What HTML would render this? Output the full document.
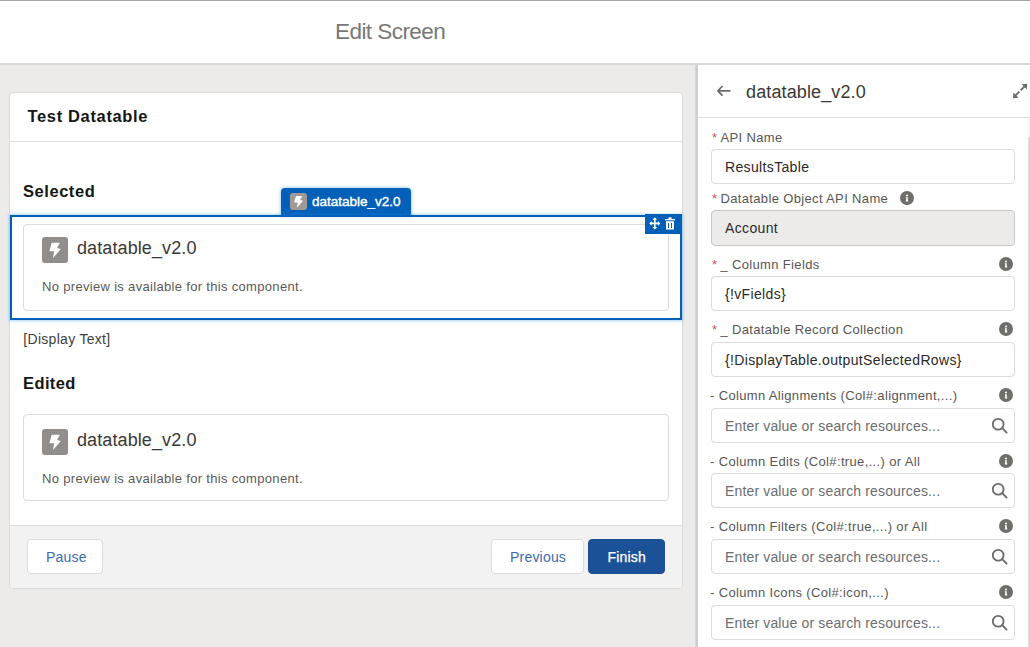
<!DOCTYPE html>
<html><head><meta charset="utf-8">
<style>
*{box-sizing:border-box;margin:0;padding:0}
html,body{width:1030px;height:647px;overflow:hidden;background:#fff;font-family:"Liberation Sans",sans-serif;color:#3e3e3c}
.a{position:absolute}
.t{position:absolute;white-space:nowrap;line-height:1}
#topline{left:0;top:0;width:1030px;height:1px;background:#a3a3a3}
#hdrb{left:0;top:63px;width:1030px;height:2px;background:#d8d8d8}
#canvas{left:0;top:65px;width:695px;height:582px;background:#ecebea}
#card{left:9px;top:92px;width:674px;height:497px;background:#fff;border:1px solid #dddbda;border-radius:4px;overflow:hidden}
#card .sep{left:0;top:48px;width:100%;height:1px;background:#dddbda}
#footer{left:0;top:432px;width:100%;height:64px;background:#f3f2f2;border-top:1px solid #dddbda}
.bold{font-weight:700;color:#161616}
.inner{position:absolute;left:23px;width:646px;height:87px;border:1px solid #dddbda;border-radius:4px;background:#fff}
.ico{position:absolute;width:26px;height:26px;border-radius:3px;background:#918d8a}
.btn{position:absolute;height:35px;border:1px solid #dddbda;border-radius:4px;background:#fff;color:#3a6bb2;font-size:14px}
#panel{left:698px;top:65px;width:332px;height:582px;background:#fff}
#pb{left:695px;top:65px;width:3px;height:582px;background:linear-gradient(to right,#dcdcdc,#cdcdcd 55%,#d3d3d3)}
.lbl{position:absolute;font-size:13px;color:#585654;white-space:nowrap;line-height:1;letter-spacing:0.35px}
.req{color:#cf5550;margin-right:3px}
.inp{position:absolute;left:711px;width:304px;height:35px;border:1px solid #dddbda;border-radius:4px;background:#fff}
.inp span{position:absolute;left:13px;top:10px;font-size:14px;line-height:1;white-space:nowrap;color:#2a2a2a;letter-spacing:0.35px}
.inp.ph span{color:#6b6d70}
.info{position:absolute;width:14px;height:14px}
.info svg{display:block}
.srch{position:absolute;left:279px;top:8px}
.inp.ph span{letter-spacing:0.15px}
</style></head>
<body>
<div class="a" id="topline"></div>
<div class="t" style="left:335px;top:20.7px;font-size:22.5px;color:#787878;letter-spacing:-0.55px">Edit Screen</div>
<div class="a" id="hdrb"></div>
<div class="a" id="canvas"></div>

<div class="a" id="card">
  <div class="t bold" style="left:17.5px;top:15px;font-size:16.5px;letter-spacing:0.65px">Test Datatable</div>
  <div class="a sep"></div>
  <div class="a" id="footer"></div>
</div>

<div class="t bold" style="left:23px;top:183px;font-size:16.5px;letter-spacing:0.55px">Selected</div>

<!-- selection tag -->
<div class="a" style="left:281px;top:188px;width:130px;height:28px;background:#0360b8;border-radius:4px 4px 0 0;box-shadow:0 0 3px 1px rgba(21,137,238,0.35)"></div>
<div class="a" style="left:290px;top:193px;width:17px;height:17px;border-radius:3px;background:#a09a94">
  <svg width="17" height="17" viewBox="2 2 22 22"><path d="M9.7 5.8 L17.9 5.8 L15 11 L18.9 12.1 L11 21 L12.1 14.2 L7.4 14.2 Z" fill="#fff"/></svg>
</div>
<div class="t" style="left:312px;top:195px;font-size:13.5px;color:#fff;-webkit-text-stroke:0.4px #fff;letter-spacing:0px">datatable_v2.0</div>

<!-- blue selection box -->
<div class="a" style="left:10px;top:215px;width:672px;height:105px;border:2px solid #0360b8;box-shadow:0 0 3px 1px rgba(21,137,238,0.35)"></div>
<div class="inner" style="top:224px">
</div>
<div class="ico" style="left:42px;top:237px"><svg width="26" height="26" viewBox="0 0 26 26"><path d="M9.7 5.8 L17.9 5.8 L15 11 L18.9 12.1 L11 21 L12.1 14.2 L7.4 14.2 Z" fill="#fff"/></svg></div>
<div class="t" style="left:77px;top:239px;font-size:18px;color:#3a3836;letter-spacing:0.1px">datatable_v2.0</div>
<div class="t" style="left:42px;top:280px;font-size:13px;color:#5c5a58;letter-spacing:0.32px">No preview is available for this component.</div>

<div class="a" style="left:645px;top:214px;width:37px;height:20px;background:#0360b8"></div>
<svg class="a" style="left:648px;top:216px" width="32" height="16" viewBox="0 0 32 16">
  <g transform="translate(6.8 7.4) scale(0.84) translate(-6.8 -8)"><path d="M6.8 2.5 V13.5 M1.8 8 H11.8" stroke="#fff" stroke-width="1.9"/><path d="M6.8 0.8 L9.6 3.8 H4 Z M6.8 15.2 L9.6 12.2 H4 Z M0.2 8 L3.2 5.2 V10.8 Z M13.4 8 L10.4 5.2 V10.8 Z" fill="#fff"/></g>
  <path d="M17 3 L27 3 L27 4.3 L17 4.3 Z M20.5 1.2 L23.5 1.2 L23.5 3 L20.5 3 Z M18 5.2 L26 5.2 L26 13.5 L18 13.5 Z" fill="#fff"/>
  <path d="M20 7 L21 7 L21 12 L20 12 Z M23 7 L24 7 L24 12 L23 12 Z" fill="#0360b8"/>
</svg>

<div class="t" style="left:23.3px;top:332px;font-size:14px;color:#3e3e3c;letter-spacing:0.3px">[Display Text]</div>
<div class="t bold" style="left:23px;top:375px;font-size:16.5px;letter-spacing:0.4px">Edited</div>

<div class="inner" style="top:414px"></div>
<div class="ico" style="left:42px;top:429px"><svg width="26" height="26" viewBox="0 0 26 26"><path d="M9.7 5.8 L17.9 5.8 L15 11 L18.9 12.1 L11 21 L12.1 14.2 L7.4 14.2 Z" fill="#fff"/></svg></div>
<div class="t" style="left:77px;top:431px;font-size:18px;color:#3a3836;letter-spacing:0.1px">datatable_v2.0</div>
<div class="t" style="left:42px;top:471.6px;font-size:13px;color:#5c5a58;letter-spacing:0.32px">No preview is available for this component.</div>

<div class="btn" style="left:27px;top:539px;width:76px"><span class="t" style="left:18px;top:9.5px;letter-spacing:0.2px">Pause</span></div>
<div class="btn" style="left:491px;top:539px;width:93px"><span class="t" style="left:18px;top:9.5px;letter-spacing:0.2px">Previous</span></div>
<div class="btn" style="left:588px;top:539px;width:77px;background:#1b5297;border-color:#1b5297;color:#fff"><span class="t" style="left:18.5px;top:9.5px;letter-spacing:0.2px;-webkit-text-stroke:0.25px #fff">Finish</span></div>

<!-- right panel -->
<div class="a" id="panel"></div>
<div class="a" id="pb"></div>
<svg class="a" style="left:716px;top:85px" width="16" height="12" viewBox="0 0 16 12"><path d="M6 1.5 L1.9 5.85 L6 10.2 M1.9 5.85 L13.8 5.85" stroke="#6b6b6b" stroke-width="1.8" fill="none" stroke-linecap="round" stroke-linejoin="round"/></svg>
<div class="t" style="left:746px;top:82.8px;font-size:18px;color:#3a3836;letter-spacing:0.12px">datatable_v2.0</div>
<svg class="a" style="left:1012px;top:83px" width="16" height="16" viewBox="0 0 16 16">
  <path d="M15.2 0.8 L9.6 1.2 L14.8 6.4 Z M1 15.2 L1.4 9.6 L6.6 14.8 Z" fill="#6b6b6b"/>
  <path d="M12.6 3.4 L8.6 7.4 M3.4 12.6 L7.4 8.6" stroke="#6b6b6b" stroke-width="1.8"/>
</svg>
<div class="a" style="left:698px;top:117px;width:332px;height:1px;background:#dddbda"></div>
<div class="a" style="left:1028px;top:118px;width:2px;height:19px;background:#f4f4f4"></div>
<div class="a" style="left:1028px;top:137px;width:2px;height:510px;background:linear-gradient(to right,#e6e6e6,#cbcbcb)"></div>

<div class="lbl" style="left:712px;top:131px"><span class="req">*</span>API Name</div>
<div class="inp" style="top:149px"><span>ResultsTable</span></div>

<div class="lbl" style="left:712px;top:192px"><span class="req">*</span>Datatable Object API Name</div>
<div class="info" style="left:900px;top:191px"><svg width="14" height="14" viewBox="0 0 14 14"><circle cx="7" cy="7" r="7" fill="#706e6b"/><circle cx="7" cy="4.4" r="1" fill="#fff"/><path d="M5.9 6.2 H7.8 V9.6 H8.3 V10.6 H5.7 V9.6 H6.2 V7.1 H5.9 Z" fill="#fff"/></svg></div>
<div class="inp" style="top:210px;height:36px;background:#ecebea;border-color:#c9c7c5"><span>Account</span></div>

<div class="lbl" style="left:712px;top:258px"><span class="req">*</span>_ Column Fields</div>
<div class="info" style="left:999px;top:257px"><svg width="14" height="14" viewBox="0 0 14 14"><circle cx="7" cy="7" r="7" fill="#706e6b"/><circle cx="7" cy="4.4" r="1" fill="#fff"/><path d="M5.9 6.2 H7.8 V9.6 H8.3 V10.6 H5.7 V9.6 H6.2 V7.1 H5.9 Z" fill="#fff"/></svg></div>
<div class="inp" style="top:276px"><span>{!vFields}</span></div>

<div class="lbl" style="left:712px;top:323px"><span class="req">*</span>_ Datatable Record Collection</div>
<div class="info" style="left:999px;top:322px"><svg width="14" height="14" viewBox="0 0 14 14"><circle cx="7" cy="7" r="7" fill="#706e6b"/><circle cx="7" cy="4.4" r="1" fill="#fff"/><path d="M5.9 6.2 H7.8 V9.6 H8.3 V10.6 H5.7 V9.6 H6.2 V7.1 H5.9 Z" fill="#fff"/></svg></div>
<div class="inp" style="top:342px"><span>{!DisplayTable.outputSelectedRows}</span></div>

<div class="lbl" style="left:710px;top:389px">- Column Alignments (Col#:alignment,...)</div>
<div class="info" style="left:999px;top:388px"><svg width="14" height="14" viewBox="0 0 14 14"><circle cx="7" cy="7" r="7" fill="#706e6b"/><circle cx="7" cy="4.4" r="1" fill="#fff"/><path d="M5.9 6.2 H7.8 V9.6 H8.3 V10.6 H5.7 V9.6 H6.2 V7.1 H5.9 Z" fill="#fff"/></svg></div>
<div class="inp ph" style="top:408px"><span>Enter value or search resources...</span><svg class="srch" width="18" height="18" viewBox="0 0 18 18"><circle cx="7.2" cy="7.2" r="5.4" stroke="#6b6b6b" stroke-width="1.8" fill="none"/><path d="M11.2 11.2 L15.6 15.6" stroke="#6b6b6b" stroke-width="1.9" stroke-linecap="round"/></svg></div>

<div class="lbl" style="left:710px;top:455px">- Column Edits (Col#:true,...) or All</div>
<div class="info" style="left:999px;top:454px"><svg width="14" height="14" viewBox="0 0 14 14"><circle cx="7" cy="7" r="7" fill="#706e6b"/><circle cx="7" cy="4.4" r="1" fill="#fff"/><path d="M5.9 6.2 H7.8 V9.6 H8.3 V10.6 H5.7 V9.6 H6.2 V7.1 H5.9 Z" fill="#fff"/></svg></div>
<div class="inp ph" style="top:473px"><span>Enter value or search resources...</span><svg class="srch" width="18" height="18" viewBox="0 0 18 18"><circle cx="7.2" cy="7.2" r="5.4" stroke="#6b6b6b" stroke-width="1.8" fill="none"/><path d="M11.2 11.2 L15.6 15.6" stroke="#6b6b6b" stroke-width="1.9" stroke-linecap="round"/></svg></div>

<div class="lbl" style="left:710px;top:520px">- Column Filters (Col#:true,...) or All</div>
<div class="info" style="left:999px;top:519px"><svg width="14" height="14" viewBox="0 0 14 14"><circle cx="7" cy="7" r="7" fill="#706e6b"/><circle cx="7" cy="4.4" r="1" fill="#fff"/><path d="M5.9 6.2 H7.8 V9.6 H8.3 V10.6 H5.7 V9.6 H6.2 V7.1 H5.9 Z" fill="#fff"/></svg></div>
<div class="inp ph" style="top:539px"><span>Enter value or search resources...</span><svg class="srch" width="18" height="18" viewBox="0 0 18 18"><circle cx="7.2" cy="7.2" r="5.4" stroke="#6b6b6b" stroke-width="1.8" fill="none"/><path d="M11.2 11.2 L15.6 15.6" stroke="#6b6b6b" stroke-width="1.9" stroke-linecap="round"/></svg></div>

<div class="lbl" style="left:710px;top:586px">- Column Icons (Col#:icon,...)</div>
<div class="info" style="left:999px;top:585px"><svg width="14" height="14" viewBox="0 0 14 14"><circle cx="7" cy="7" r="7" fill="#706e6b"/><circle cx="7" cy="4.4" r="1" fill="#fff"/><path d="M5.9 6.2 H7.8 V9.6 H8.3 V10.6 H5.7 V9.6 H6.2 V7.1 H5.9 Z" fill="#fff"/></svg></div>
<div class="inp ph" style="top:605px"><span>Enter value or search resources...</span><svg class="srch" width="18" height="18" viewBox="0 0 18 18"><circle cx="7.2" cy="7.2" r="5.4" stroke="#6b6b6b" stroke-width="1.8" fill="none"/><path d="M11.2 11.2 L15.6 15.6" stroke="#6b6b6b" stroke-width="1.9" stroke-linecap="round"/></svg></div>

</body></html>
